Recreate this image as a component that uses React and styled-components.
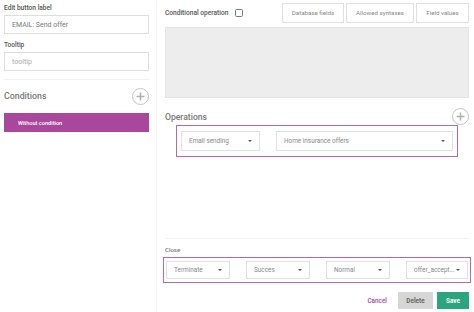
import React from 'react';
import styled, { createGlobalStyle } from 'styled-components';

const GlobalStyle = createGlobalStyle`
  html, body {
    margin: 0;
    padding: 0;
    background: #fff;
  }
  body {
    font-family: Roboto, "Liberation Sans", sans-serif;
    color: #555;
  }
`;

const Page = styled.div`
  display: flex;
  width: 474px;
  height: 312px;
  overflow: hidden;
`;

const LeftPanel = styled.div`
  width: 145px;
  padding: 3px 7px 0 4px;
  border-right: 1px solid #f3f3f3;
  display: flex;
  flex-direction: column;
`;

const FieldLabel = styled.div`
  font-size: 6.6px;
  font-weight: 500;
  color: #555;
  height: 12px;
  line-height: 10px;
`;

const TextInput = styled.div`
  height: 17px;
  border: 1px solid #dedede;
  display: flex;
  align-items: center;
  padding-left: 7px;
  font-size: 7px;
  color: ${p => (p.$placeholder ? '#aaa' : '#777')};
  margin-bottom: ${p => p.$mb || 0}px;
`;

const Divider = styled.div`
  height: 1px;
  background: #f0f0f0;
  margin: 8px 0 7px;
`;

const SectionHead = styled.div`
  display: flex;
  align-items: center;
  justify-content: space-between;
  height: 18px;
`;

const SectionTitle = styled.div`
  font-size: ${p => p.$size || 9}px;
  font-weight: 500;
  color: #777;
`;

const PlusCircle = styled.div`
  width: 15px;
  height: 15px;
  border: 1px solid #c4c4c4;
  border-radius: 50%;
  display: flex;
  align-items: center;
  justify-content: center;
  background: #fff;
`;

const ConditionItem = styled.div`
  margin-top: 8px;
  height: 19px;
  background: #a8479c;
  color: #fff;
  font-size: 5.6px;
  font-weight: 500;
  display: flex;
  align-items: center;
  padding-left: 14px;
`;

const RightPanel = styled.div`
  flex: 1;
  padding: 3px 5px 0 8px;
  display: flex;
  flex-direction: column;
`;

const TopRow = styled.div`
  display: flex;
  align-items: center;
  height: 19px;
`;

const CheckLabel = styled.div`
  font-size: 6.6px;
  font-weight: 500;
  color: #555;
  display: flex;
  align-items: center;
  gap: 7px;
`;

const CheckBox = styled.span`
  width: 6px;
  height: 6px;
  border: 1px solid #777;
  border-radius: 1.5px;
  display: inline-block;
`;

const TabGroup = styled.div`
  margin-left: auto;
  display: flex;
  gap: 2px;
`;

const TabButton = styled.div`
  width: ${p => p.$w}px;
  height: 18px;
  border: 1px solid #e0e0e0;
  display: flex;
  align-items: center;
  justify-content: center;
  font-size: 6.2px;
  color: #888;
`;

const Editor = styled.div`
  margin-top: 5px;
  height: 69px;
  background: #ededed;
  border: 1px solid #e4e4e4;
`;

const OpsHead = styled(SectionHead)`
  margin-top: 10px;
  height: 17px;
`;

const HighlightBox = styled.div`
  border: 1.5px solid #b46aa8;
  display: flex;
  align-items: center;
  gap: ${p => p.$gap}px;
  padding: ${p => p.$pad};
  margin: ${p => p.$m};
`;

const Select = styled.div`
  width: ${p => (p.$w ? `${p.$w}px` : 'auto')};
  flex: ${p => (p.$w ? 'none' : 1)};
  height: ${p => p.$h}px;
  box-sizing: border-box;
  border: 1px solid #e0e0e0;
  background: #fff;
  display: flex;
  align-items: center;
  justify-content: space-between;
  padding: 0 7px 0 7px;
  font-size: 6.4px;
  color: #888;
`;

const Caret = styled.span`
  width: 0;
  height: 0;
  border-left: 2.5px solid transparent;
  border-right: 2.5px solid transparent;
  border-top: 2.5px solid #555;
`;

const Spacer = styled.div`
  flex: 1;
`;

const CloseSection = styled.div`
  border-top: 1px solid #f2f2f2;
  padding-top: 7px;
`;

const CloseLabel = styled.div`
  font-size: 6px;
  font-weight: 500;
  color: #777;
  height: 10px;
`;

const Footer = styled.div`
  display: flex;
  justify-content: flex-end;
  align-items: center;
  gap: 4px;
  margin: 9px 0 3px;
`;

const LinkButton = styled.div`
  font-size: 6.4px;
  font-weight: 500;
  color: #a8479c;
  margin-right: 7px;
`;

const Button = styled.div`
  width: ${p => p.$w}px;
  height: 17px;
  display: flex;
  align-items: center;
  justify-content: center;
  font-size: 6.4px;
  font-weight: 700;
  background: ${p => (p.$primary ? '#2aa57d' : '#d6d6d6')};
  color: ${p => (p.$primary ? '#fff' : '#666')};
`;

function Plus() {
  return (
    <PlusCircle>
      <svg width="11" height="11" viewBox="0 0 11 11">
        <path d="M5.5 1.5v8M1.5 5.5h8" stroke="#b0b0b0" strokeWidth="1.5" />
      </svg>
    </PlusCircle>
  );
}

function Dropdown({ label, w, h = 20 }) {
  return (
    <Select $w={w} $h={h}>
      <span>{label}</span>
      <Caret />
    </Select>
  );
}

export default function App() {
  return (
    <Page>
      <GlobalStyle />
      <LeftPanel>
        <FieldLabel>Edit button label</FieldLabel>
        <TextInput $mb={6}>EMAIL: Send offer</TextInput>
        <FieldLabel>Tooltip</FieldLabel>
        <TextInput $placeholder>tooltip</TextInput>
        <Divider />
        <SectionHead>
          <SectionTitle $size={8.8}>Conditions</SectionTitle>
          <Plus />
        </SectionHead>
        <ConditionItem>Without condition</ConditionItem>
      </LeftPanel>

      <RightPanel>
        <TopRow>
          <CheckLabel>
            Conditional operation <CheckBox />
          </CheckLabel>
          <TabGroup>
            <TabButton $w={60}>Database fields</TabButton>
            <TabButton $w={66}>Allowed syntaxes</TabButton>
            <TabButton $w={51}>Field values</TabButton>
          </TabGroup>
        </TopRow>
        <Editor />

        <OpsHead>
          <SectionTitle $size={8.6}>Operations</SectionTitle>
          <Plus />
        </OpsHead>
        <HighlightBox $gap={16} $pad="5px 4px" $m="0 11px">
          <Dropdown label="Email sending" w={79} />
          <Dropdown label="Home insurance offers" />
        </HighlightBox>

        <Spacer />

        <CloseSection>
          <CloseLabel>Close</CloseLabel>
          <HighlightBox $gap={16} $pad="3px 2px" $m="1px -2px 0">
            <Dropdown label="Terminate" w={64} h={18} />
            <Dropdown label="Succes" w={64} h={18} />
            <Dropdown label="Normal" w={64} h={18} />
            <Dropdown label="offer_accept..." w={62} h={18} />
          </HighlightBox>
        </CloseSection>

        <Footer>
          <LinkButton>Cancel</LinkButton>
          <Button $w={35}>Delete</Button>
          <Button $w={32} $primary>Save</Button>
        </Footer>
      </RightPanel>
    </Page>
  );
}
